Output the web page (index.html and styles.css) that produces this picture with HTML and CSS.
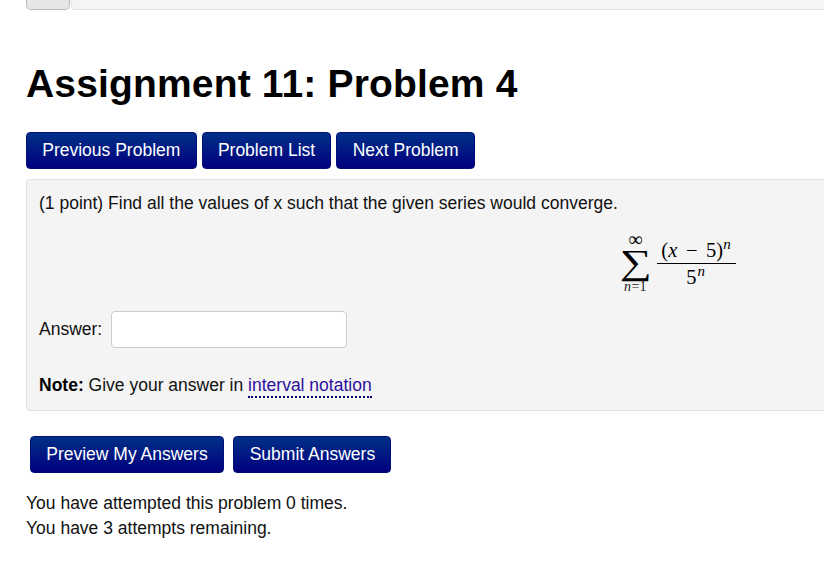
FILE: index.html
```html
<!DOCTYPE html>
<html lang="en">
<head>
<meta charset="utf-8">
<title>Assignment 11: Problem 4</title>
<link rel="stylesheet" href="styles.css">
</head>
<body>
<div class="page">
  <div class="topbar">
    <div class="topbtn"></div>
    <div class="topwell"></div>
  </div>
  <h1 class="title">Assignment 11: Problem 4</h1>
  <div class="nav">
    <a class="btn">Previous Problem</a>
    <a class="btn">Problem List</a>
    <a class="btn">Next Problem</a>
  </div>
  <div class="problem">
    <p class="intro">(1 point) Find all the values of x such that the given series would converge.</p>
    <div class="math">
      <div class="sum">
        <span class="sum-top">∞</span>
        <span class="sum-sign">∑</span>
        <span class="sum-bottom"><i>n</i>=1</span>
      </div>
      <div class="frac">
        <div class="num">(<i>x</i> − 5)<sup><i>n</i></sup></div>
        <div class="den">5<sup><i>n</i></sup></div>
      </div>
    </div>
    <div class="answer">
      <label class="answer-label" for="ans">Answer:</label>
      <input class="answer-input" id="ans" type="text">
    </div>
    <p class="note"><b>Note:</b> Give your answer in <a class="hint">interval notation</a></p>
  </div>
  <div class="submit">
    <a class="btn">Preview My Answers</a>
    <a class="btn">Submit Answers</a>
  </div>
  <p class="status">You have attempted this problem 0 times.<br>You have 3 attempts remaining.</p>
</div>
</body>
</html>
```
FILE: styles.css
```css
html, body {
  margin: 0;
  padding: 0;
  background: #fff;
  overflow: hidden;
  height: 570px;
}
.page {
  width: 1304px;
  margin-left: 26px;
  font-family: "Liberation Sans", Arial, sans-serif;
  font-size: 17.5px;
  line-height: 25px;
  color: #111;
}
.topbar {
  display: flex;
  height: 10px;
  gap: 1px;
}
.topbtn {
  width: 42px;
  border: 1px solid #bbb;
  border-top: 0;
  border-radius: 0 0 5px 5px;
  background: #e6e6e6;
}
.topwell {
  flex: 1;
  background: #f5f5f5;
  border-bottom: 1px solid #e3e3e3;
  border-left: 1px solid #e3e3e3;
  border-radius: 0 0 0 4px;
}
.title {
  margin: 50px 0 0;
  font-size: 39px;
  line-height: 47px;
  font-weight: bold;
  letter-spacing: 0.16px;
  color: #000;
}
.nav {
  display: flex;
  gap: 5px;
  margin-top: 25px;
}
.btn {
  display: block;
  height: 37px;
  box-sizing: border-box;
  padding: 5px 15.25px;
  line-height: 25px;
  color: #fff;
  border: 1px solid #00107a;
  border-radius: 4px;
  background: linear-gradient(#003087, #00007f);
}
.problem {
  margin-top: 10px;
  height: 232px;
  box-sizing: border-box;
  padding: 11px 12px 0;
  background: #f4f4f4;
  border: 1px solid #e3e3e3;
  border-radius: 4px;
}
.intro {
  margin: 0;
}
.math {
  display: flex;
  justify-content: center;
  align-items: center;
  gap: 6px;
  height: 83px;
  margin-top: 6px;
  font-family: "Liberation Serif", "DejaVu Serif", serif;
  color: #000;
}
.sum {
  display: flex;
  flex-direction: column;
  align-items: center;
  width: 30px;
}
.sum-top {
  font-size: 20px;
  height: 10px;
  line-height: 8px;
}
.sum-sign {
  font-size: 39px;
  height: 34px;
  line-height: 34px;
  transform: scale(1.15, 0.9);
}
.sum-bottom {
  font-size: 14px;
  height: 14px;
  line-height: 16px;
  letter-spacing: 0.3px;
  color: #222;
}
.frac {
  display: flex;
  flex-direction: column;
  align-items: center;
  width: 79px;
  font-size: 20.5px;
  line-height: 22px;
}
.num {
  width: 100%;
  text-align: center;
  border-bottom: 1.5px solid #000;
  padding-bottom: 2px;
  word-spacing: 3.5px;
}
.den {
  padding-top: 2px;
  letter-spacing: 1px;
}
.frac sup {
  font-size: 15px;
  line-height: 0;
}
.answer {
  display: flex;
  align-items: center;
  gap: 9px;
  margin-top: 6px;
}
.answer-input {
  width: 236px;
  height: 37px;
  box-sizing: border-box;
  background: #fff;
  border: 1px solid #ccc;
  border-radius: 4px;
  padding: 0;
}
.note {
  margin: 25px 0 0;
}
.note b {
  color: #000;
}
.hint {
  color: #2c0f9c;
  border-bottom: 2px dotted #000080;
  padding-bottom: 1px;
}
.submit {
  display: flex;
  gap: 9.5px;
  margin: 25px 0 0 4px;
}
.status {
  margin: 18px 0 0;
  color: #111;
}
```
